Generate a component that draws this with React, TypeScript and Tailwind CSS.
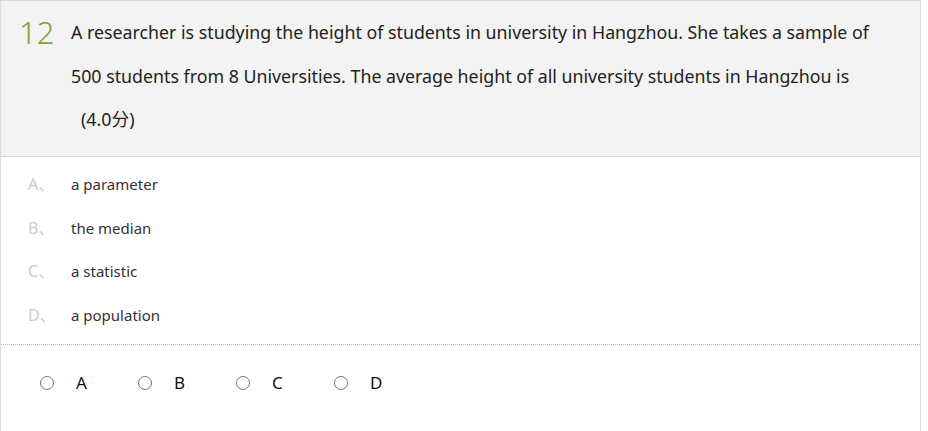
import React from 'react';

const options = [
  { key: 'A', text: 'a parameter' },
  { key: 'B', text: 'the median' },
  { key: 'C', text: 'a statistic' },
  { key: 'D', text: 'a population' }
];

const font = { fontFamily: '"Noto Sans", "Noto Sans CJK SC", sans-serif' };

export default function App() {
  return (
    <div className="w-[928px] h-[431px] bg-white overflow-hidden" style={font}>
      <div className="w-[921px] h-full border-l border-r border-t border-[#dcdcdc]">
        {/* Question */}
        <div className="flex bg-[#f3f3f3] border-b border-[#d4d4d4] pt-[10px] pb-[14px]">
          <div className="w-[70px] shrink-0 pl-[18px] text-[31px] leading-[42px] font-light text-[#7ea23c]">
            12
          </div>
          <div className="pr-[40px] text-[17.8px] leading-[43.5px] text-[#222]">
            <div>
              A researcher is studying the height of students in university in Hangzhou. She takes a sample of 500
              students from 8 Universities. The average height of all university students in Hangzhou is
            </div>
            <div className="pl-[10px]">(4.0分)</div>
          </div>
        </div>

        {/* Options */}
        <div className="pt-[6px] pb-[7px] border-b border-dotted border-[#bbb]">
          {options.map(o => (
            <div key={o.key} className="flex items-center h-[43.5px]">
              <div className="w-[70px] pl-[27px] text-[16px] text-[#cbcbcb]">{o.key}、</div>
              <div className="text-[15px] text-[#333]">{o.text}</div>
            </div>
          ))}
        </div>

        {/* Answer */}
        <div className="flex items-center pl-[39px] h-[76px]">
          {options.map(o => (
            <label key={o.key} className="flex items-center w-[98px]">
              <span className="w-[14px] h-[14px] rounded-full border-[1.5px] border-[#777] mr-[22px]" />
              <span className="text-[17px] text-[#111]">{o.key}</span>
            </label>
          ))}
        </div>
      </div>
    </div>
  );
}
